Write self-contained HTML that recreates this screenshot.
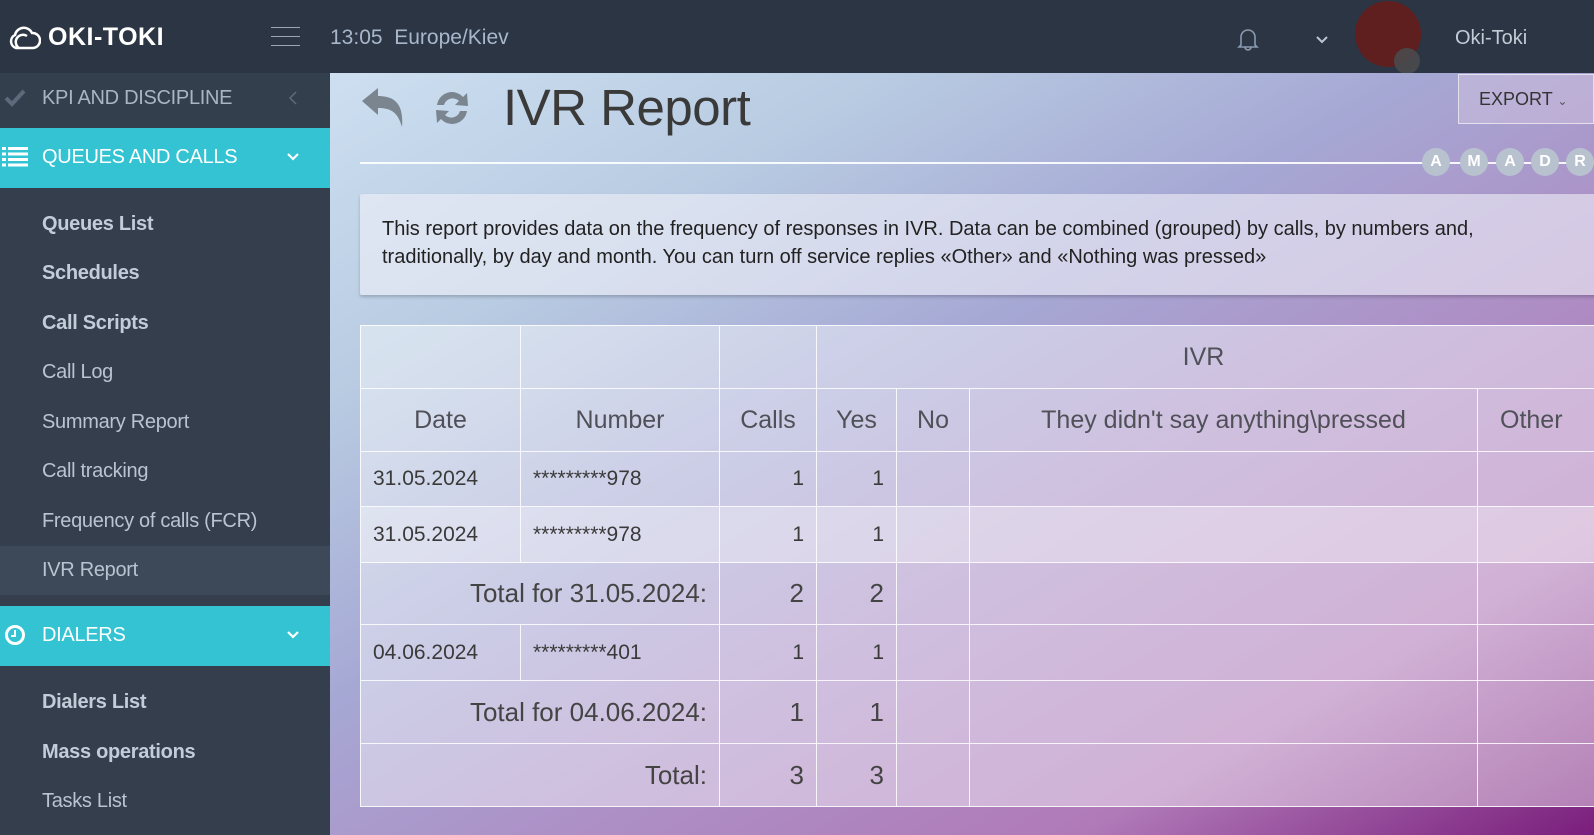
<!DOCTYPE html>
<html><head><meta charset="utf-8"><style>
*{box-sizing:border-box;margin:0;padding:0}
body{width:1594px;height:835px;overflow:hidden;position:relative;font-family:"Liberation Sans",sans-serif;background:#343e4d}
.hdr{position:absolute;left:0;top:0;width:1594px;height:73px;background:#2b3543}
.abs{position:absolute}
.side{position:absolute;left:0;top:73px;width:330px;height:762px;background:#343e4d}
.si{position:absolute;left:42px;font-size:20px;color:#b9c4d2;letter-spacing:-0.3px}
.si.b{font-weight:bold;color:#c3ccd8}
.main{position:absolute;left:330px;top:73px;width:1264px;height:762px;overflow:hidden;
background:linear-gradient(150deg,#cddff0 0%,#b8cbe2 22%,#a6a8d4 42%,#ad90c6 60%,#b07ab8 80%,#7a1e7c 100%)}
.tbl{position:absolute;left:30px;top:252px;border-collapse:collapse;background:rgba(255,255,255,0.42);table-layout:fixed;width:1250px}
.tbl td{border:1.5px solid rgba(255,255,255,0.85);color:#3a3a3a;font-size:21px;padding:0 12px;white-space:nowrap}
.h td{font-size:25px;color:#505058;text-align:center}
.r{text-align:right}
.tot td.big{font-size:26px;color:#444}
.badge{position:absolute;top:75px;width:28px;height:28px;border-radius:50%;background:#b8c2cf;color:#fff;font-weight:bold;font-size:16px;text-align:center;line-height:28px}
</style></head><body>
<div class="hdr">
 <svg class="abs" style="left:7px;top:24px" width="34" height="26" viewBox="0 0 34 26"><path d="M9 24 A7 7 0 0 1 8 11 A9 9 0 0 1 25 9 A7.5 7.5 0 0 1 26 24 Z" fill="none" stroke="#fff" stroke-width="2.5"/><path d="M12 24 A7 7 0 0 1 20 12" fill="none" stroke="#fff" stroke-width="2.5"/></svg>
 <div class="abs" style="left:48px;top:23px;font-size:25px;font-weight:bold;color:#fff;letter-spacing:0.5px">OKI-TOKI</div>
 <div class="abs" style="left:271px;top:27px;width:29px;height:1px;background:#9aa6b6"></div>
 <div class="abs" style="left:271px;top:36px;width:29px;height:1px;background:#9aa6b6"></div>
 <div class="abs" style="left:271px;top:45px;width:29px;height:1px;background:#9aa6b6"></div>
 <div class="abs" style="left:330px;top:26px;font-size:21px;color:#a8b7cb">13:05&nbsp; Europe/Kiev</div>
 <svg class="abs" style="left:1234px;top:25px" width="28" height="28" viewBox="0 0 28 28"><path d="M7 20 L7 12 A7 7 0 0 1 21 12 L21 20 L23 22 L5 22 Z M11 22 A3 3 0 0 0 17 22" fill="none" stroke="#8a9ab0" stroke-width="1.6"/></svg>
 <svg class="abs" style="left:1315px;top:35px" width="14" height="10" viewBox="0 0 14 10"><path d="M2 2 L7 7 L12 2" fill="none" stroke="#b8c6d8" stroke-width="2"/></svg>
 <div class="abs" style="left:1355px;top:1px;width:66px;height:66px;border-radius:50%;background:#5f1f1f"></div>
 <div class="abs" style="left:1394px;top:48px;width:26px;height:26px;border-radius:50%;background:#4a4a4c;opacity:.9"></div>
 <div class="abs" style="left:1455px;top:27px;font-size:20px;color:#c3cbd6">Oki-Toki</div>
</div>
<div class="side">
 <div class="abs" style="left:0;top:0;width:330px;height:55px;background:#343f4e"></div>
 <svg class="abs" style="left:4px;top:15px" width="22" height="20" viewBox="0 0 22 20"><path d="M2 10 L8 16 L20 3" fill="none" stroke="#5c6a7c" stroke-width="4"/></svg>
 <div class="si" style="top:14px;color:#a9b5c5">KPI AND DISCIPLINE</div>
 <svg class="abs" style="left:288px;top:17px" width="10" height="16" viewBox="0 0 10 16"><path d="M8 2 L2 8 L8 14" fill="none" stroke="#5e6b7c" stroke-width="1.5"/></svg>
 <div class="abs" style="left:0;top:55px;width:330px;height:60px;background:#33c3d3"></div>
 <svg class="abs" style="left:2px;top:74px" width="26" height="20" viewBox="0 0 26 20"><g fill="#fff"><rect x="0" y="0" width="4" height="3"/><rect x="6" y="0" width="20" height="3"/><rect x="0" y="5.5" width="4" height="3"/><rect x="6" y="5.5" width="20" height="3"/><rect x="0" y="11" width="4" height="3"/><rect x="6" y="11" width="20" height="3"/><rect x="0" y="16.5" width="4" height="3"/><rect x="6" y="16.5" width="20" height="3"/></g></svg>
 <div class="si" style="top:73px;color:#fff">QUEUES AND CALLS</div>
 <svg class="abs" style="left:286px;top:79px" width="14" height="10" viewBox="0 0 14 10"><path d="M2 2 L7 7 L12 2" fill="none" stroke="#fff" stroke-width="2.2"/></svg>
 <div class="si b" style="top:140px">Queues List</div>
 <div class="si b" style="top:189px">Schedules</div>
 <div class="si b" style="top:239px">Call Scripts</div>
 <div class="si" style="top:288px">Call Log</div>
 <div class="si" style="top:338px">Summary Report</div>
 <div class="si" style="top:387px">Call tracking</div>
 <div class="si" style="top:437px">Frequency of calls (FCR)</div>
 <div class="abs" style="left:0;top:473px;width:330px;height:49px;background:#3d4858"></div>
 <div class="si" style="top:486px">IVR Report</div>
 <div class="abs" style="left:0;top:533px;width:330px;height:60px;background:#33c3d3"></div>
 <svg class="abs" style="left:4px;top:551px" width="22" height="22" viewBox="0 0 22 22"><circle cx="11" cy="11" r="8.5" fill="none" stroke="#fff" stroke-width="3"/><path d="M11 6 V12 H7" fill="none" stroke="#fff" stroke-width="2"/></svg>
 <div class="si" style="top:551px;color:#fff">DIALERS</div>
 <svg class="abs" style="left:286px;top:557px" width="14" height="10" viewBox="0 0 14 10"><path d="M2 2 L7 7 L12 2" fill="none" stroke="#fff" stroke-width="2.2"/></svg>
 <div class="si b" style="top:618px">Dialers List</div>
 <div class="si b" style="top:668px">Mass operations</div>
 <div class="si" style="top:717px">Tasks List</div>
</div>
<div class="main">
 <svg class="abs" style="left:30px;top:14px" width="48" height="42" viewBox="0 0 48 42"><path d="M2 14 L18 1 L18 9 C34 9 44 16 42 40 C38 26 32 21 18 21 L18 28 Z" fill="#7a8590"/></svg>
 <svg class="abs" style="left:102px;top:16px" width="40" height="38" viewBox="0 0 40 38"><path d="M5 16 A15 15 0 0 1 31 8 L35 4 L36 17 L23 16 L27 12 A9 9 0 0 0 12 16 Z M35 22 A15 15 0 0 1 9 30 L5 34 L4 21 L17 22 L13 26 A9 9 0 0 0 28 22 Z" fill="#7a8590"/></svg>
 <div class="abs" style="left:173px;top:5px;font-size:51px;color:#3a3a3a;letter-spacing:-0.5px">IVR Report</div>
 <div class="abs" style="left:1128px;top:1px;width:136px;height:50px;background:rgba(225,210,230,0.35);border:1px solid rgba(255,255,255,0.6);font-size:18px;color:#333;line-height:48px;padding-left:20px">EXPORT <span style="font-size:12px;color:#555">&#8964;</span></div>
 <div class="abs" style="left:30px;top:89px;width:1234px;height:1.5px;background:rgba(255,255,255,0.9)"></div>
 <div class="badge" style="left:1092px">A</div>
 <div class="badge" style="left:1130px">M</div>
 <div class="badge" style="left:1166px">A</div>
 <div class="badge" style="left:1201px">D</div>
 <div class="badge" style="left:1236px">R</div>
 <div class="abs" style="left:30px;top:121px;width:1240px;height:101px;background:rgba(240,240,248,0.6);box-shadow:0 2px 3px rgba(0,0,0,0.2);border-radius:2px;padding:22px 22px;font-size:20px;line-height:27.5px;color:#222;white-space:nowrap">This report provides data on the frequency of responses in IVR. Data can be combined (grouped) by calls, by numbers and,<br>traditionally, by day and month. You can turn off service replies «Other» and «Nothing was pressed»</div>
 <table class="tbl">
  <colgroup><col style="width:160px"><col style="width:199px"><col style="width:97px"><col style="width:80px"><col style="width:73px"><col style="width:508px"><col style="width:133px"></colgroup>
  <tr class="h" style="height:63px"><td></td><td></td><td></td><td colspan="4" style="text-align:center;padding-left:0;padding-right:20px">IVR</td></tr>
  <tr class="h" style="height:63px"><td>Date</td><td>Number</td><td>Calls</td><td>Yes</td><td>No</td><td>They didn't say anything\pressed</td><td style="text-align:left;padding-left:22px">Other</td></tr>
  <tr style="height:55px"><td>31.05.2024</td><td>*********978</td><td class="r">1</td><td class="r">1</td><td></td><td></td><td></td></tr>
  <tr style="height:56px;background:rgba(255,255,255,0.3)"><td>31.05.2024</td><td>*********978</td><td class="r">1</td><td class="r">1</td><td></td><td></td><td></td></tr>
  <tr class="tot" style="height:62px"><td colspan="2" class="r big">Total for 31.05.2024:</td><td class="r big">2</td><td class="r big">2</td><td></td><td></td><td></td></tr>
  <tr style="height:56px"><td>04.06.2024</td><td>*********401</td><td class="r">1</td><td class="r">1</td><td></td><td></td><td></td></tr>
  <tr class="tot" style="height:63px"><td colspan="2" class="r big">Total for 04.06.2024:</td><td class="r big">1</td><td class="r big">1</td><td></td><td></td><td></td></tr>
  <tr class="tot" style="height:63px"><td colspan="2" class="r big">Total:</td><td class="r big">3</td><td class="r big">3</td><td></td><td></td><td></td></tr>
 </table>
</div>
</body></html>
